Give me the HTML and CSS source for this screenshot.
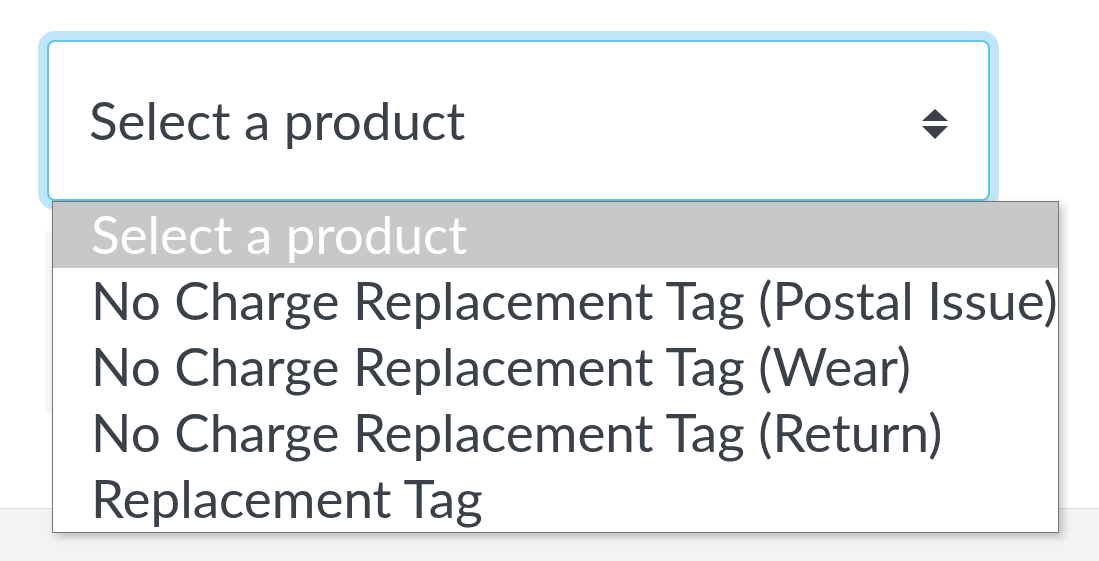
FILE: index.html
```html
<!DOCTYPE html>
<html lang="en">
<head>
<meta charset="utf-8">
<title>Select a product</title>
<link rel="stylesheet" href="styles.css">
</head>
<body>
<div class="page">
  <main class="content">
    <div class="select" role="combobox" aria-expanded="true">
      <span class="select-value">Select a product</span>
      <svg class="select-arrows" width="26" height="30" viewBox="0 0 26 30" aria-hidden="true">
        <polygon points="13,0 26,12 0,12" fill="#3a4148"/>
        <polygon points="0,17 26,17 13,30" fill="#3a4148"/>
      </svg>
    </div>
    <div class="behind"></div>
  </main>
  <footer class="footer"></footer>
  <ul class="dropdown" role="listbox">
    <li class="option selected">Select a product</li>
    <li class="option">No Charge Replacement Tag (Postal Issue)</li>
    <li class="option">No Charge Replacement Tag (Wear)</li>
    <li class="option">No Charge Replacement Tag (Return)</li>
    <li class="option">Replacement Tag</li>
  </ul>
</div>
</body>
</html>
```
FILE: styles.css
```css
* { box-sizing: border-box; }
html, body { margin: 0; padding: 0; }
body {
  background: #ffffff;
  font-family: Lato, "Open Sans", "Liberation Sans", sans-serif;
  color: #3a4148;
  width: 1099px;
  height: 561px;
  overflow: hidden;
}
.page {
  position: relative;
  height: 561px;
  display: flex;
  flex-direction: column;
}
.content {
  height: 508px;
  padding: 40px 0 0 47px;
  display: flex;
  flex-direction: column;
}
.select {
  width: 943px;
  height: 161px;
  border: 2px solid #5ec6f3;
  border-radius: 8px;
  box-shadow: 0 0 0 9px #bfe7f8;
  background: #fff;
  display: flex;
  align-items: center;
  justify-content: space-between;
  padding: 0 40px 0 40px;
  position: relative;
  z-index: 1;
}
.select-value {
  font-size: 53px;
  line-height: 66px;
  color: #3a4148;
  padding-bottom: 2px;
}
.select-arrows { display: block; margin-top: 6px; }
.behind {
  margin-top: 30px;
  width: 300px;
  height: 182px;
  margin-left: -2px;
  background: #f6f6f6;
  border-radius: 4px;
}
.footer {
  flex: 1;
  background: #f3f3f3;
  border-top: 1px solid #dcdcdc;
}
.dropdown {
  position: absolute;
  left: 52px;
  top: 201px;
  width: 1007px;
  margin: 0;
  padding: 0;
  list-style: none;
  background: #fff;
  border: 1px solid #767676;
  box-shadow: 4px 4px 8px rgba(0, 0, 0, 0.22);
  z-index: 5;
}
.option {
  height: 66px;
  line-height: 64px;
  font-size: 53px;
  padding-left: 38px;
  white-space: nowrap;
  color: #3a4148;
}
.option.selected {
  background: #c8c8c8;
  color: #ffffff;
}
```
